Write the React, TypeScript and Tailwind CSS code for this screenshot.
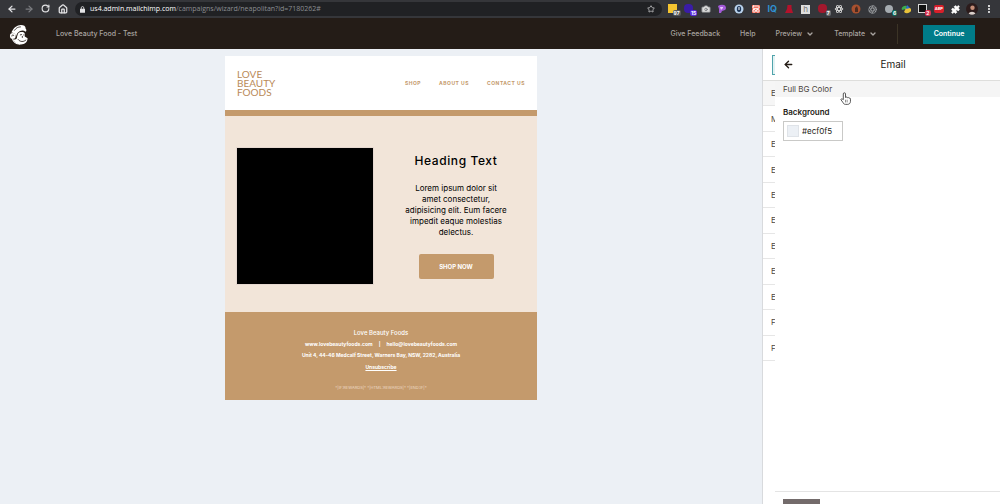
import { useState } from "react";
import type { ReactNode } from "react";
import {
  Aperture,
  ArrowLeft,
  ArrowRight,
  Camera,
  ChevronDown,
  House,
  LayoutPanelTop,
  MoreVertical,
  Puzzle,
  RotateCw,
  Star,
} from "lucide-react";

interface Extension {
  name: string;
  icon: ReactNode;
  badge?: string;
  badgeClass?: string;
}

const extensions: Extension[] = [
  { name: "Notes", icon: <span className="mb-[2px] size-[9px] bg-[#f4c430]" />, badge: "97", badgeClass: "bg-[#55585c]" },
  { name: "Tracker", icon: <span className="mb-[2px] size-[9px] rounded-sm bg-[#3a1ca8]" />, badge: "15", badgeClass: "bg-[#5b2be0]" },
  { name: "Screenshot", icon: <Camera className="size-[10px] fill-[#dcdcdc] text-[#77797d]" /> },
  {
    name: "Palette",
    icon: (
      <svg viewBox="0 0 10 10" className="size-[10px]">
        <path d="M1 2q3-2 6-1a3 3 0 0 1 1 5L5 7 4 9H2V5z" fill="#a35ad8" />
        <path d="M3 3h3v1L4 6z" fill="#e9c5ff" />
      </svg>
    ),
  },
  {
    name: "Lens",
    icon: (
      <svg viewBox="0 0 10 10" className="size-[10px]">
        <circle cx="5" cy="5" r="4.5" fill="#b9d2ec" />
        <ellipse cx="5" cy="5" rx="2.2" ry="3" fill="#1d3557" />
        <path d="M5 3v3" stroke="#fff" />
      </svg>
    ),
  },
  { name: "Layout", icon: <LayoutPanelTop className="size-2 bg-[#e8533f] text-white" strokeWidth={3} /> },
  { name: "IQ", icon: <span className="text-[9px] font-bold text-[#2f8fd0]">IQ</span> },
  {
    name: "Alert",
    icon: (
      <svg viewBox="0 0 10 10" className="size-[10px]">
        <path d="M3.5 1h4v3L9 9H1l2-4z" fill="#b3122b" />
      </svg>
    ),
  },
  { name: "Honey", icon: <span className="flex size-[9px] items-center justify-center bg-[#dedede] text-[8px] text-[#777]">h</span> },
  { name: "Counter", icon: <span className="mb-[2px] size-[9px] rounded-sm bg-[#a3182d]" />, badge: "7", badgeClass: "bg-[#6b6e72]" },
  {
    name: "React",
    icon: (
      <svg viewBox="0 0 10 10" className="size-[10px]" fill="none" stroke="#d8d8d8" strokeWidth="0.9">
        <ellipse cx="5" cy="5" rx="4" ry="1.6" />
        <ellipse cx="5" cy="5" rx="4" ry="1.6" transform="rotate(60 5 5)" />
        <ellipse cx="5" cy="5" rx="4" ry="1.6" transform="rotate(120 5 5)" />
      </svg>
    ),
  },
  {
    name: "Ghost",
    icon: (
      <svg viewBox="0 0 10 10" className="size-[10px]">
        <circle cx="5" cy="5" r="4.5" fill="#a8502e" />
        <path d="M4 8V4l2-2 1 3v3z" fill="#4b2a20" />
      </svg>
    ),
  },
  { name: "Aperture", icon: <Aperture className="size-[9px] text-[#a6a8ab]" /> },
  { name: "Globe", icon: <span className="size-2 rounded-full bg-[#a5abb0]" />, badge: "6", badgeClass: "bg-[#0c6b58]" },
  {
    name: "Downloader",
    icon: (
      <svg viewBox="0 0 10 10" className="size-[10px]">
        <path d="M1 6a4 3 0 0 1 5-4l-1 3z" fill="#3cae4b" />
        <path d="M9 4a4 3 0 0 1-6 4l2-4z" fill="#e8c23a" />
        <path d="M6 1l3 3-4 1z" fill="#2f6fd0" />
      </svg>
    ),
  },
  { name: "Window", icon: <span className="mb-[2px] size-[9px] border border-[#d6d6d6] bg-[#111]" />, badge: "2", badgeClass: "bg-[#d9304c]" },
  {
    name: "Adblock Plus",
    icon: <span className="rounded-xs bg-[#d81f2a] px-px text-[4px] leading-[8px] font-bold text-white">ABP</span>,
  },
  { name: "Extensions", icon: <Puzzle className="size-[9px] fill-white text-white" /> },
  {
    name: "Profile",
    icon: (
      <svg viewBox="0 0 12 12" className="size-[12px]">
        <circle cx="6" cy="6" r="6" fill="#2c1b1b" />
        <circle cx="6.5" cy="4.8" r="2.2" fill="#c58e78" />
        <path d="M2.500 10.500a4 3.500 0 0 1 7 0A6 6 0 0 1 2.500 10.500z" fill="#d9d0cc" />
      </svg>
    ),
  },
  { name: "Menu", icon: <MoreVertical className="size-[10px] text-white" strokeWidth={3} /> },
];

const blockNames = ["E", "M", "E", "E", "E", "E", "E", "E", "E", "F", "F"];

const emailLinks = ["SHOP", "ABOUT US", "CONTACT US"];

function MonkeyLogo() {
  return (
    <svg viewBox="0 0 20 22" className="h-[21px] w-[20px]" aria-hidden="true">
      <path d="M2 9C4 4 8 1 12 1c3 0 5 1 5 4 1 1 1 2 0 3-3-2-6-1-8 1-1 1-2 3-2 4C6 10 4 9 2 9z" fill="#fff" />
      <path d="M5 7c2-3 4-4 7-4" stroke="#241c17" strokeWidth="0.8" fill="none" />
      <circle cx="3.500" cy="12.500" r="3" fill="#fff" />
      <path d="M2.500 13c0-2 2-2 2-0.500" stroke="#241c17" strokeWidth="0.9" fill="none" />
      <path d="M3 15c1 3.500 4 6 8 6" stroke="#fff" strokeWidth="1.2" fill="none" />
      <path d="M9 10c2-2 6-2 7 0v3l3 2c0 4-3 6.500-7 6.500-4 0-7-2.500-8-5.500 3 1 4-1 4-3z" fill="#fff" />
      <path d="M11 11.500l2-0.500M14.500 11.500h1M13.500 12.500v2M9 16c2 3 6 3 8.500 0.500" stroke="#241c17" strokeWidth="0.9" fill="none" />
    </svg>
  );
}

function BrowserBar() {
  return (
    <div className="flex h-[18px] shrink-0 items-center bg-[#35363a] pr-[3px] pl-[3px] text-[#e4e4e6]">
      <div className="flex shrink-0">
        <button aria-label="Back" className="flex w-[17px] justify-center">
          <ArrowLeft className="size-[10px]" strokeWidth={3} />
        </button>
        <button aria-label="Forward" className="flex w-[17px] justify-center text-[#7c7d81]">
          <ArrowRight className="size-[10px]" strokeWidth={3} />
        </button>
        <button aria-label="Reload" className="flex w-[17px] justify-center">
          <RotateCw className="size-[9px]" strokeWidth={3} />
        </button>
        <button aria-label="Home" className="flex w-[17px] justify-center">
          <House className="size-[10px]" strokeWidth={3} />
        </button>
      </div>
      <div className="ml-1 flex h-[14px] flex-1 items-center rounded-full bg-[#202124] px-[5px]">
        <svg viewBox="0 0 6 8" className="h-[7px] w-[5px]" aria-hidden="true">
          <rect y="3" width="6" height="5" rx="0.5" fill="#e4e4e6" />
          <path d="M1.500 3.500V2a1.500 1.500 0 0 1 3 0v1.500" fill="none" stroke="#e4e4e6" />
        </svg>
        <p className="ml-[5px] flex-1 font-['Open_Sans',sans-serif] text-[7px] leading-3 text-[#8c8e92]">
          <span className="text-white">us4.admin.mailchimp.com</span>
          /campaigns/wizard/neapolitan?id=7180262#
        </p>
        <button aria-label="Bookmark this tab">
          <Star className="mr-[2px] size-2" strokeWidth={2} />
        </button>
      </div>
      <div className="ml-[2px] flex w-[333px] shrink-0">
        {extensions.map((ext) => (
          <button key={ext.name} aria-label={ext.name} className="relative flex h-[14px] flex-1 items-center justify-center">
            {ext.icon}
            {ext.badge && (
              <span
                className={`absolute right-0 bottom-0 rounded-xs px-px text-[5px] leading-[6px] font-bold text-white ${ext.badgeClass}`}
              >
                {ext.badge}
              </span>
            )}
          </button>
        ))}
      </div>
    </div>
  );
}

function TopNav() {
  return (
    <header className="flex h-[31px] shrink-0 items-center bg-[#241c17] pt-px pr-[25px] pl-[9px] text-[7px] font-medium text-[#a9a4a0]">
      <MonkeyLogo />
      <h1 className="ml-[27px] flex-1">Love Beauty Food - Test</h1>
      <nav className="flex items-center gap-5">
        <a href="#feedback">Give Feedback</a>
        <a href="#help">Help</a>
        <button className="flex items-center gap-1">
          Preview
          <ChevronDown className="size-2" strokeWidth={4} />
        </button>
        <button className="flex items-center gap-1">
          Template
          <ChevronDown className="size-2" strokeWidth={4} />
        </button>
      </nav>
      <div className="mx-5 h-5 border-l border-[#3c3426]" />
      <button className="ml-[5px] h-[19px] w-[52px] bg-[#007c89] font-semibold text-white">Continue</button>
    </header>
  );
}

function EmailPreview() {
  return (
    <main className="flex-1 overflow-hidden bg-[#ecf0f5] pt-[7px]">
      <article className="mx-auto w-[312px] bg-[#f2e5d9]">
        <div className="flex h-[60px] items-center justify-between border-b-6 border-[#c49a6c] bg-white px-3 pt-[2px]">
          <p className="pb-[2px] font-['Lato',sans-serif] text-[10px] leading-[9px] text-[#b98a58]">
            LOVE
            <br />
            BEAUTY
            <br />
            FOODS
          </p>
          <nav className="flex gap-[18px] text-[5px] font-bold tracking-widest text-[#c49a6c]">
            {emailLinks.map((link) => (
              <a key={link} href="#shop">
                {link}
              </a>
            ))}
          </nav>
        </div>

        <div className="flex gap-[14px] px-3 pt-8 pb-7">
          <div className="size-[136px] shrink-0 bg-black ring-1 ring-[#e6d8d0]" />
          <div className="flex flex-1 flex-col items-center pt-[5px] text-center text-black">
            <h2 className="text-[12px] leading-4 font-medium tracking-wider">Heading Text</h2>
            <p className="mt-[14px] text-[8px] leading-[11px]">
              Lorem ipsum dolor sit
              <br />
              amet consectetur,
              <br />
              adipisicing elit. Eum facere
              <br />
              impedit eaque molestias
              <br />
              delectus.
            </p>
            <button className="mt-4 h-[25px] w-[75px] rounded-xs bg-[#c49a6c] text-[6px] font-bold text-white">
              SHOP NOW
            </button>
          </div>
        </div>

        <footer className="h-[88px] bg-[#c49a6c] pt-[15px] text-center text-[5px] leading-[11px] font-bold text-white">
          <p className="text-[6px] leading-3 font-medium">Love Beauty Foods</p>
          <p>
            <a href="#site">www.lovebeautyfoods.com</a>
            <span className="mx-[6px]">|</span>
            <a href="#mail">hello@lovebeautyfoods.com</a>
          </p>
          <p>Unit 4, 44-46 Medcalf Street, Warners Bay, NSW, 2282, Australia</p>
          <a href="#unsubscribe" className="block leading-3 underline">
            Unsubscribe
          </a>
          <p className="mt-[10px] text-[4px] leading-[10px] font-normal text-[#ecd9c4]">
            *|IF:REWARDS|* *|HTML:REWARDS|* *|END:IF|*
          </p>
        </footer>
      </article>
    </main>
  );
}

function StylePanel() {
  const [color, setColor] = useState("#ecf0f5");

  return (
    <aside className="flex w-[238px] shrink-0 overflow-hidden border-l border-[#d8dadd] bg-white text-[#241c15]">
      {/* Design list left visible behind the open panel */}
      <div className="w-3 shrink-0 overflow-hidden">
        <div className="flex h-8 items-center justify-end border-b border-[#dededc]">
          <div className="h-5 w-[3px] border-y border-l border-[#4fa3ab] bg-[#e3f2f3]" />
        </div>
        <ul className="grid h-[280px] auto-rows-fr text-[8px] text-[#4c4641]">
          {blockNames.map((name, i) => (
            <li
              key={i}
              className={`flex items-center border-b border-[#e6e6e6] pl-2 ${i === 0 ? "bg-[#f6f6f6]" : ""}`}
            >
              {name}
            </li>
          ))}
        </ul>
      </div>

      <section className="flex flex-1 flex-col">
        <div className="flex h-8 items-center border-b border-[#dededc] px-2">
          <button aria-label="Back to design">
            <ArrowLeft className="size-[11px]" strokeWidth={3} />
          </button>
          <h2 className="flex-1 text-center text-[10px]">Email</h2>
        </div>
        <div className="relative bg-[#f5f5f5] px-2 text-[8px] leading-4 text-[#4c4641]">
          Full BG Color
          <svg viewBox="0 0 20 24" className="absolute top-[11px] left-[65px] w-[11px]" aria-hidden="true">
            <path
              d="M6 14V3.500a2 2 0 0 1 4 0V10a2 2 0 0 1 3.500 0.500 2 2 0 0 1 3 1 1.500 1.500 0 0 1 2.500 1.500V17c0 3-2 5.500-5 5.500H10c-3 0-4-2-5-4l-3-4c-1-1.500 1-3 2.500-1.500z"
              fill="#fff"
              stroke="#333"
              strokeWidth="1.5"
            />
            <path d="M10 14v5M13 14v5" stroke="#333" strokeWidth="1" />
          </svg>
        </div>
        <div className="px-2 pt-2">
          <label htmlFor="background" className="block text-[8px] leading-[14px] font-semibold">
            Background
          </label>
          <div className="mt-[2px] flex h-5 w-[60px] items-center gap-[3px] border border-[#c9c9c7] px-[3px]">
            <span className="size-3 shrink-0 border border-[#dfe3e8]" style={{ backgroundColor: color }} />
            <input
              id="background"
              value={color}
              onChange={(e) => setColor(e.target.value)}
              className="w-full min-w-0 text-[8px] outline-none"
            />
          </div>
        </div>
        <div className="mt-auto h-[13px] overflow-hidden border-t border-[#e4e4e4] px-2 pt-[7px]">
          <button aria-label="Save" className="h-5 w-[37px] bg-[#736b6b]" />
        </div>
      </section>
    </aside>
  );
}

export default function App() {
  return (
    <div className="flex h-screen flex-col overflow-hidden font-['Inter',sans-serif]">
      <BrowserBar />
      <TopNav />
      <div className="flex min-h-0 flex-1">
        <EmailPreview />
        <StylePanel />
      </div>
    </div>
  );
}
